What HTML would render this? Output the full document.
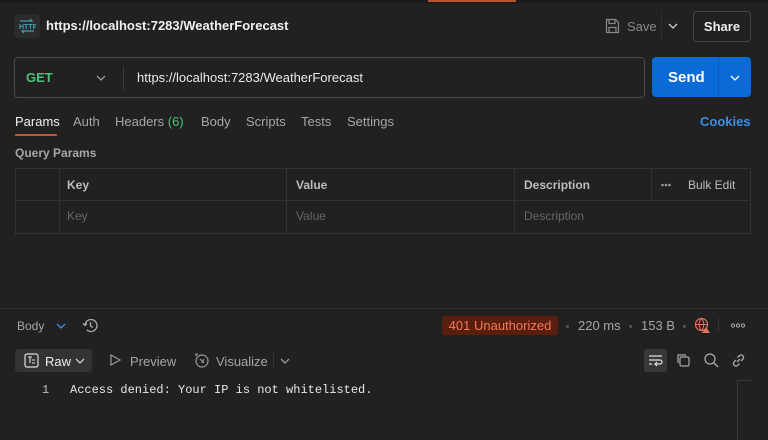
<!DOCTYPE html>
<html><head><style>
*{margin:0;padding:0;box-sizing:border-box}
body{width:768px;height:440px;background:#212121;font-family:"Liberation Sans",sans-serif;color:#e6e6e6;position:relative;overflow:hidden;font-size:13px}
.a{position:absolute;white-space:nowrap}
.g{color:#a6a6a6}
</style></head><body>
<div class="a" style="left:0;top:0;width:768px;height:3px;background:#1a1a1a"></div>
<div class="a" style="left:428px;top:0;width:88px;height:2px;background:#b5552f"></div>
<div class="a" style="left:14px;top:14px;width:26px;height:24px;border-radius:4px;background:#2b2b2b"></div>
<svg class="a" style="left:18px;top:18px" width="18" height="16" viewBox="0 0 18 16"><path d="M2 3h12l-2-2M16 13H4l2 2" stroke="#3fa3b5" fill="none" stroke-width="1.2"/><text x="1" y="11" font-size="7" font-weight="bold" fill="#3fa3b5" font-family="Liberation Sans">HTTP</text></svg>
<div class="a" style="left:46px;top:18px;font-weight:bold;font-size:13px;color:#f0f0f0">https://localhost:7283/WeatherForecast</div>
<svg class="a" style="left:605px;top:18px" width="15" height="16" viewBox="0 0 15 16"><path d="M1.5 1.5h9l3 3v10h-12z M4 1.5v4h6v-4 M4 14.5v-5h7v5" stroke="#8a8a8a" fill="none" stroke-width="1.2"/></svg>
<div class="a" style="left:627px;top:19px;color:#8a8a8a">Save</div>
<div class="a" style="left:661px;top:12px;width:1px;height:28px;background:#2e2e2e"></div>
<svg class="a" style="left:668px;top:22px" width="10" height="8"><path d="M1 2l4 4 4-4" stroke="#cfcfcf" fill="none" stroke-width="1.3"/></svg>
<div class="a" style="left:693px;top:11px;width:58px;height:31px;border:1px solid #444;border-radius:4px;text-align:center;line-height:29px;font-weight:bold;color:#eee">Share</div>
<div class="a" style="left:14px;top:57px;width:631px;height:41px;border:1px solid #4a4a4a;border-radius:4px"></div>
<div class="a" style="left:26px;top:70px;font-weight:bold;color:#4fc07b">GET</div>
<svg class="a" style="left:96px;top:74px" width="10" height="8"><path d="M1 2l4 4 4-4" stroke="#9a9a9a" fill="none" stroke-width="1.3"/></svg>
<div class="a" style="left:123px;top:66px;width:1px;height:24px;background:#3a3a3a"></div>
<div class="a" style="left:137px;top:70px;color:#eaeaea">https://localhost:7283/WeatherForecast</div>
<div class="a" style="left:652px;top:57px;width:99px;height:40px;background:#0a6bd6;border-radius:4px"></div>
<div class="a" style="left:718px;top:57px;width:1px;height:40px;background:#0a5bb6"></div>
<div class="a" style="left:668px;top:69px;font-weight:bold;font-size:15px;color:#fff">Send</div>
<svg class="a" style="left:730px;top:74px" width="10" height="8"><path d="M1 2l4 4 4-4" stroke="#fff" fill="none" stroke-width="1.3"/></svg>
<div class="a" style="left:15px;top:114px;color:#f0f0f0">Params</div>
<div class="a" style="left:15px;top:134px;width:42px;height:2px;background:#c0562f"></div>
<div class="a g" style="left:73px;top:114px">Auth</div>
<div class="a g" style="left:115px;top:114px">Headers <span style="color:#4fc07b">(6)</span></div>
<div class="a g" style="left:201px;top:114px">Body</div>
<div class="a g" style="left:246px;top:114px">Scripts</div>
<div class="a g" style="left:301px;top:114px">Tests</div>
<div class="a g" style="left:347px;top:114px">Settings</div>
<div class="a" style="left:700px;top:114px;font-weight:bold;color:#3b8fe8">Cookies</div>
<div class="a g" style="left:15px;top:146px;font-weight:bold;font-size:12px">Query Params</div>
<div class="a" style="left:15px;top:168px;width:736px;height:66px;border:1px solid #333"></div>
<div class="a" style="left:15px;top:200px;width:736px;height:1px;background:#333"></div>
<div class="a" style="left:59px;top:168px;width:1px;height:66px;background:#333"></div>
<div class="a" style="left:286px;top:168px;width:1px;height:66px;background:#333"></div>
<div class="a" style="left:514px;top:168px;width:1px;height:66px;background:#333"></div>
<div class="a" style="left:651px;top:168px;width:1px;height:32px;background:#333"></div>
<div class="a g" style="left:67px;top:178px;font-weight:bold;font-size:12px;color:#bdbdbd">Key</div>
<div class="a g" style="left:296px;top:178px;font-weight:bold;font-size:12px;color:#bdbdbd">Value</div>
<div class="a g" style="left:524px;top:178px;font-weight:bold;font-size:12px;color:#bdbdbd">Description</div>
<svg class="a" style="left:661px;top:183px" width="10" height="4"><circle cx="1.5" cy="2" r="1.3" fill="#999"/><circle cx="5" cy="2" r="1.3" fill="#999"/><circle cx="8.5" cy="2" r="1.3" fill="#999"/></svg>
<div class="a g" style="left:688px;top:178px;font-size:12px;color:#bdbdbd">Bulk Edit</div>
<div class="a" style="left:67px;top:209px;font-size:12px;color:#666">Key</div>
<div class="a" style="left:296px;top:209px;font-size:12px;color:#666">Value</div>
<div class="a" style="left:524px;top:209px;font-size:12px;color:#666">Description</div>
<div class="a" style="left:0;top:308px;width:768px;height:1px;background:#2e2e2e"></div>
<div class="a g" style="left:17px;top:319px;font-size:12px">Body</div>
<svg class="a" style="left:56px;top:322px" width="10" height="8"><path d="M1 2l4 4 4-4" stroke="#3b8fe8" fill="none" stroke-width="1.3"/></svg>
<svg class="a" style="left:82px;top:317px" width="17" height="17" viewBox="0 0 17 17"><path d="M3 8.5a6 6 0 1 1 1.8 4.3M1 6.5l2 2 2-2M8.5 5v4l2.5 1.5" stroke="#aaa" fill="none" stroke-width="1.3"/></svg>
<div class="a" style="left:442px;top:316px;width:116px;height:19px;background:#5a1e0e;border-radius:3px;color:#ef7a5c;text-align:center;line-height:19px">401 Unauthorized</div>
<div class="a" style="left:566px;top:325px;width:3px;height:3px;border-radius:2px;background:#555"></div>
<div class="a g" style="left:578px;top:318px">220 ms</div>
<div class="a" style="left:629px;top:325px;width:3px;height:3px;border-radius:2px;background:#555"></div>
<div class="a g" style="left:641px;top:318px">153 B</div>
<div class="a" style="left:683px;top:325px;width:3px;height:3px;border-radius:2px;background:#555"></div>
<svg class="a" style="left:694px;top:317px" width="17" height="17" viewBox="0 0 17 17"><circle cx="7.5" cy="7.5" r="6" stroke="#e0745a" fill="none" stroke-width="1.2"/><path d="M1.5 7.5h12M7.5 1.5c-3 3-3 9 0 12M7.5 1.5c3 3 3 9 0 12" stroke="#e0745a" fill="none" stroke-width="1"/><path d="M12 10l4 6h-8z" fill="#e0745a"/></svg>
<div class="a" style="left:718px;top:318px;width:1px;height:14px;background:#333"></div>
<svg class="a" style="left:731px;top:323px" width="14" height="5"><circle cx="2" cy="2.5" r="1.6" stroke="#aaa" fill="none"/><circle cx="7" cy="2.5" r="1.6" stroke="#aaa" fill="none"/><circle cx="12" cy="2.5" r="1.6" stroke="#aaa" fill="none"/></svg>
<div class="a" style="left:15px;top:349px;width:77px;height:23px;background:#333;border-radius:3px"></div>
<svg class="a" style="left:24px;top:353px" width="15" height="15" viewBox="0 0 15 15"><rect x="1" y="1" width="13" height="13" rx="2" stroke="#ddd" fill="none" stroke-width="1.2"/><path d="M4 4h4M6 4v6M8 7h3M8 10h3" stroke="#ddd" stroke-width="1.1"/></svg>
<div class="a" style="left:45px;top:354px;color:#eee">Raw</div>
<svg class="a" style="left:75px;top:357px" width="10" height="8"><path d="M1 2l4 4 4-4" stroke="#ccc" fill="none" stroke-width="1.3"/></svg>
<svg class="a" style="left:109px;top:353px" width="12" height="14"><path d="M2 2l9 5-9 5z" stroke="#999" fill="none" stroke-width="1.2"/></svg>
<div class="a g" style="left:130px;top:354px">Preview</div>
<svg class="a" style="left:193px;top:352px" width="17" height="16" viewBox="0 0 17 16"><circle cx="9" cy="9" r="6" stroke="#999" fill="none" stroke-width="1.2"/><path d="M7 7l4 4M11 7l-2 4M2 2l2 2M4 1v2" stroke="#999" stroke-width="1.1"/></svg>
<div class="a g" style="left:216px;top:354px">Visualize</div>
<div class="a" style="left:273px;top:352px;width:1px;height:17px;background:#333"></div>
<svg class="a" style="left:280px;top:357px" width="10" height="8"><path d="M1 2l4 4 4-4" stroke="#999" fill="none" stroke-width="1.3"/></svg>
<div class="a" style="left:644px;top:349px;width:23px;height:23px;background:#383838;border-radius:3px"></div>
<svg class="a" style="left:647px;top:352px" width="17" height="17" viewBox="0 0 17 17"><path d="M2 4h13M2 8h11a2 2 0 0 1 0 4H8l2-2M8 12l2 2M2 12h3" stroke="#ddd" fill="none" stroke-width="1.2"/></svg>
<svg class="a" style="left:675px;top:352px" width="17" height="17" viewBox="0 0 17 17"><rect x="5" y="5" width="9" height="9" rx="1.5" stroke="#aaa" fill="none" stroke-width="1.2"/><path d="M3 11V3h8" stroke="#aaa" fill="none" stroke-width="1.2"/></svg>
<svg class="a" style="left:703px;top:352px" width="17" height="17" viewBox="0 0 17 17"><circle cx="7" cy="7" r="5" stroke="#aaa" fill="none" stroke-width="1.3"/><path d="M11 11l4 4" stroke="#aaa" stroke-width="1.3"/></svg>
<svg class="a" style="left:730px;top:352px" width="17" height="17" viewBox="0 0 17 17"><path d="M7 10l3-3M6 8l-2 2a2.5 2.5 0 0 0 3.5 3.5l2-2M11 9l2-2A2.5 2.5 0 0 0 9.5 3.5l-2 2" stroke="#aaa" fill="none" stroke-width="1.3"/></svg>
<div class="a" style="left:737px;top:380px;width:1px;height:60px;background:#3a3a3a"></div>
<div class="a" style="left:737px;top:380px;width:14px;height:1px;background:#3a3a3a"></div>
<div class="a" style="left:42px;top:383px;font-family:'Liberation Mono',monospace;font-size:12px;color:#bbb">1</div>
<div class="a" style="left:70px;top:383px;font-family:'Liberation Mono',monospace;font-size:12px;color:#e8e8e8">Access denied: Your IP is not whitelisted.</div>
</body></html>
